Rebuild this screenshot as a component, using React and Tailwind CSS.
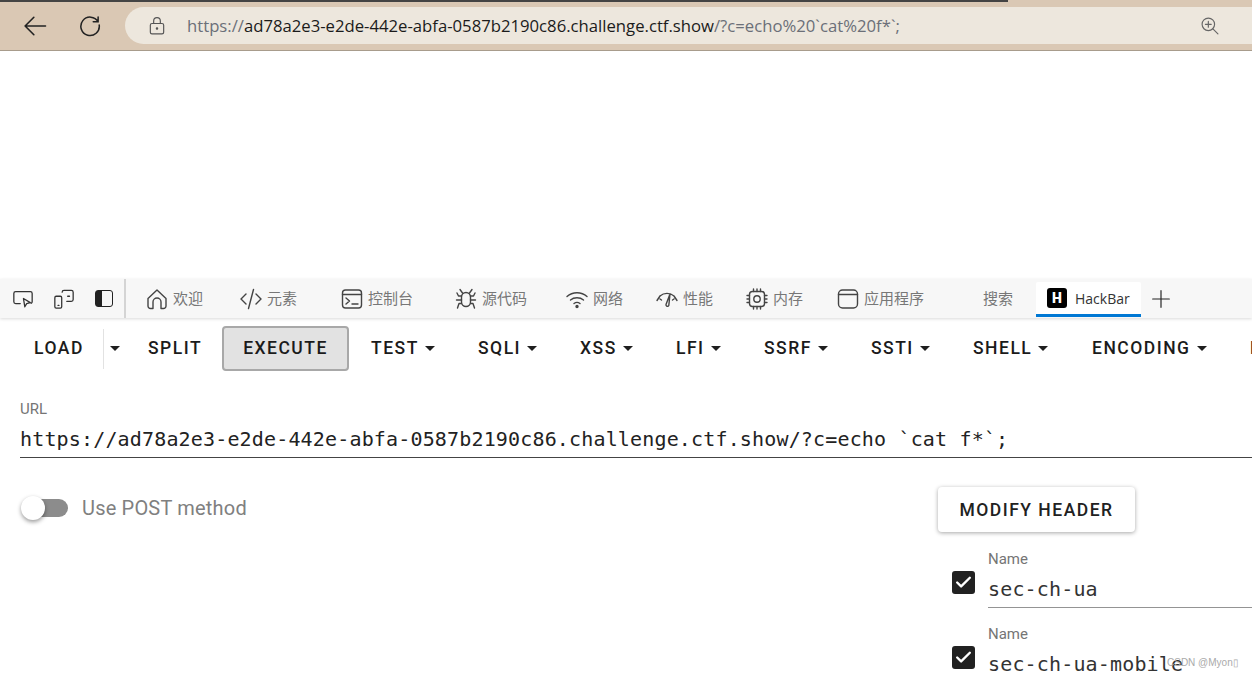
import React from "react";
import { Check } from "lucide-react";

const cjk = "font-['Noto_Sans_CJK_SC','Noto_Sans',sans-serif]";
const mono = "font-['DejaVu_Sans_Mono',monospace]";
const roboto = "font-['Roboto',sans-serif]";

const Svg = ({ children, className = "w-[24px] h-[24px]" }) => (
  <svg viewBox="0 0 24 24" fill="none" stroke="currentColor" strokeWidth="1.4" strokeLinecap="round" strokeLinejoin="round" className={`shrink-0 ${className}`}>
    {children}
  </svg>
);

const tabs = [
  {
    label: "欢迎",
    w: "w-[94px]",
    icon: <path d="M3 11.5 12 3l9 8.5V19a2.5 2.5 0 0 1-2.5 2.5H16V15a4 4 0 0 0-8 0v6.5H5.5A2.5 2.5 0 0 1 3 19z" />,
  },
  {
    label: "元素",
    w: "w-[101px]",
    icon: <path d="M7 7l-5 5 5 5M17 7l5 5-5 5M14.5 2.5l-5 19" />,
  },
  {
    label: "控制台",
    w: "w-[114px]",
    icon: (
      <>
        <rect x="2.5" y="3" width="19" height="18" rx="3" />
        <path d="M2.5 7.5h19M6 11l3.5 3L6 17M12 17h6" />
      </>
    ),
  },
  {
    label: "源代码",
    w: "w-[111px]",
    icon: (
      <>
        <path d="M7.5 10a4.5 4.5 0 0 1 9 0v5a4.5 4.5 0 0 1-9 0z" />
        <path d="M8.5 6 6 2.5M15.5 6 18 2.5M7.5 9H4.5L3 6M16.5 9h3L21 6M7.5 13H2.5M16.5 13h5M7.5 16.5H5L3.5 21M16.5 16.5H19l1.500 4.500" />
      </>
    ),
  },
  {
    label: "网络",
    w: "w-[90px]",
    icon: (
      <>
        <path d="M2 9.500c5.500-5 14.500-5 20 0M5.500 13c3.500-3 9.500-3 13 0M9 16.500c1.700-1.300 4.300-1.300 6 0" />
        <circle cx="12" cy="19.500" r="1" fill="currentColor" />
      </>
    ),
  },
  {
    label: "性能",
    w: "w-[90px]",
    icon: <path d="M2 13.500 5 9M5 9c4-3.500 10-3.500 14 0l3 4.500M6.500 13l-1.500-1M17.500 13l1.500-1M15 7l-4 10.500a1.500 1.500 0 0 0 2.800 1z" />,
  },
  {
    label: "内存",
    w: "w-[91px]",
    icon: (
      <>
        <rect x="4.500" y="4.500" width="15" height="15" rx="3" />
        <circle cx="12" cy="12" r="3.200" />
        <path d="M8.500 2v2.500M12 2v2.500M15.500 2v2.500M8.500 19.500V22M12 19.500V22M15.500 19.500V22M2 8.500h2.500M2 12h2.500M2 15.500h2.500M19.500 8.500H22M19.500 12H22M19.500 15.500H22" />
      </>
    ),
  },
  {
    label: "应用程序",
    w: "w-[147px]",
    icon: (
      <>
        <rect x="2.500" y="3" width="19" height="18" rx="4" />
        <path d="M2.500 7.500h19" />
      </>
    ),
  },
];

const menu = [
  { label: "TEST", cls: "ml-[22px] w-[107px]" },
  { label: "SQLI", cls: "w-[102px]" },
  { label: "XSS", cls: "w-[96px]" },
  { label: "LFI", cls: "w-[88px]" },
  { label: "SSRF", cls: "w-[107px]" },
  { label: "SSTI", cls: "w-[102px]" },
  { label: "SHELL", cls: "w-[119px]" },
  { label: "ENCODING", cls: "w-[158px]" },
];

const Caret = () => <span className="shrink-0 w-0 h-0 border-x-[5.500px] border-x-transparent border-t-[5.500px] border-t-[#1f1f1f] ml-[6px] mt-[-1px]" />;

const HeaderRow = ({ value }) => (
  <div className="flex h-[75px]">
    <div className="ml-[14px] mt-[19px] w-[23px] h-[23px] rounded-[3px] bg-[#212121] flex items-center justify-center text-white">
      <Check size={19} strokeWidth={3} />
    </div>
    <div className="ml-[13px] flex-1">
      <div className={`${roboto} text-[15px] leading-[16px] text-[#757575] mt-[-1px]`}>Name</div>
      <div className={`${mono} text-[20px] leading-[26px] mt-[9px] tracking-[0.16px] text-[#333] h-[32px] border-b border-[#949494] whitespace-nowrap`}>{value}</div>
    </div>
  </div>
);

export default function App() {
  return (
    <div className={`relative w-[1252px] h-[678px] overflow-hidden bg-white ${roboto}`}>
      {/* browser chrome */}
      <div className="h-[51px] bg-[#dac8b4] border-b border-[#a89c8c] relative flex items-center">
        <div className="absolute top-0 left-0 w-[1008px] h-[2px] bg-[#444]" />
        <div className="w-[125px] h-[37px] flex items-center text-[#222] shrink-0 mt-[1px]">
          <Svg className="w-[28px] h-[28px] ml-[21px]"><path d="M21 12H3.500M11 4.500 3.500 12l7.500 7.500" /></Svg>
          <Svg className="w-[26px] h-[26px] ml-[28px] mt-[-3px]"><path d="M19.500 5.500V10h-4.500M19.500 10a8.500 8.500 0 1 0 1 3" /></Svg>
        </div>
        <div className="flex-1 h-[37px] rounded-l-[19px] bg-[#ede7dd] flex items-center mt-[1px]">
          <Svg className="w-[20px] h-[20px] ml-[22px] text-[#555]">
            <rect x="4" y="9" width="16" height="12.500" rx="2" />
            <path d="M8 9V6a4 4 0 0 1 8 0v3" />
            <circle cx="12" cy="15" r="0.800" fill="currentColor" />
          </Svg>
          <div className="ml-[20px] w-[1014px] mt-[1px] text-[16.700px] text-[#1b1b1b] font-['Open_Sans',sans-serif] whitespace-nowrap">
            <span className="text-[#6b6f78]">https://</span>ad78a2e3-e2de-442e-abfa-0587b2190c86.challenge.ctf.show<span className="text-[#6b6f78]">/?c=echo%20`cat%20f*`;</span>
          </div>
          <Svg className="w-[20px] h-[20px] text-[#666] absolute left-[1200px] top-[16px]">
            <circle cx="10" cy="10" r="7.500" />
            <path d="M15.500 15.500 21.500 21.500M10 6.500v7M6.500 10h7" />
          </Svg>
        </div>
      </div>

      <div className="h-[228px]" />

      {/* devtools tabs */}
      <div className={`h-[39px] bg-[#f7f7f7] shadow-[0_1px_3px_rgba(0,0,0,0.15)] flex items-center relative ${cjk} text-[15px] text-[#777]`}>
        <div className="flex items-center text-[#333] w-[126px] h-full border-r-2 border-[#d4d4d4] shrink-0">
          <Svg className="w-[22px] h-[22px] ml-[12px]"><path d="M9 17H4a2 2 0 0 1-2-2V6a2 2 0 0 1 2-2h16a2 2 0 0 1 2 2v9a2 2 0 0 1-1 1.700M12.500 11.500l1.500 9 2-3.500 4-1z" /></Svg>
          <Svg className="w-[22px] h-[22px] ml-[19px]"><path d="M10 4.500a2 2 0 0 1 2-2h8a2 2 0 0 1 2 2v8a2 2 0 0 1-2 2h-5M16 9h2M3.500 9H8a1.500 1.500 0 0 1 1.500 1.500v10A1.500 1.500 0 0 1 8 22H3.500A1.500 1.500 0 0 1 2 20.500v-10A1.500 1.500 0 0 1 3.500 9zM5.500 19h1" /></Svg>
          <div className="ml-[20px] w-[18px] h-[17px] rounded-[3px] border-[1.500px] border-[#222] bg-[linear-gradient(90deg,#222_40%,transparent_40%)]" />
        </div>
        <div className="flex items-center h-full ml-[19px]">
          {tabs.map((t) => (
            <div key={t.label} className={`flex items-center shrink-0 ${t.w}`}>
              <span className="text-[#444]"><Svg>{t.icon}</Svg></span>
              <span className="ml-[4px] whitespace-nowrap">{t.label}</span>
            </div>
          ))}
          <span className="w-[53px] shrink-0">搜索</span>
          <div className="w-[105px] h-[35px] bg-white border-b-[3px] border-[#0078d4] rounded-t-[2px] flex items-center shrink-0 mt-[2px]">
            <div className="ml-[11px] w-[20px] h-[20px] rounded-[3px] bg-black flex items-center justify-center text-white font-['Roboto',sans-serif] font-black text-[14px] leading-none">H</div>
            <span className="ml-[8px] font-['Open_Sans',sans-serif] text-[14px] text-[#333]">HackBar</span>
          </div>
          <Svg className="w-[20px] h-[20px] ml-[10px] text-[#222]"><path d="M12 2v20M2 12h20" /></Svg>
        </div>
      </div>

      {/* hackbar toolbar */}
      <div className="h-[52px] mt-[4px] pt-px flex items-center text-[17.500px] font-medium tracking-[1.500px] text-[#1b1b1b] whitespace-nowrap">
        <span className="ml-[34px] w-[69px] shrink-0">LOAD</span>
        <span className="w-px h-[40px] bg-[#e2e2e2] shrink-0" />
        <span className="shrink-0 w-0 h-0 border-x-[5.500px] border-x-transparent border-t-[5.500px] border-t-[#1f1f1f] ml-[6px]" />
        <span className="ml-[28px] w-[74px] shrink-0">SPLIT</span>
        <div className="w-[127px] h-[45px] mt-[-1px] pt-px shrink-0 rounded-[4px] border-2 border-[#a8a8a8] bg-[#e2e2e2] flex items-center justify-center">EXECUTE</div>
        {menu.map((m) => (
          <div key={m.label} className={`flex items-center shrink-0 ${m.cls}`}>
            <span>{m.label}</span>
            <Caret />
          </div>
        ))}
        <span className="text-[#1b1b1b] shrink-0">L</span>
      </div>

      {/* url field */}
      <div className="px-[20px] mt-[27px]">
        <div className="text-[15px] leading-[16px] text-[#757575]">URL</div>
        <div className={`${mono} text-[20px] leading-[26px] tracking-[0.16px] text-[#222] mt-[9px] h-[32px] border-b border-[#444] mr-[-20px] whitespace-nowrap`}>
          https://ad78a2e3-e2de-442e-abfa-0587b2190c86.challenge.ctf.show/?c=echo `cat f*`;
        </div>
      </div>

      {/* options */}
      <div className="flex mt-[29px] pl-[20px]">
        <div className="flex-1 flex items-start">
          <div className="relative w-[48px] h-[18px] mt-[12px]">
            <div className="absolute left-[6px] right-0 inset-y-0 rounded-full bg-[#8c8c8c]" />
            <div className="absolute left-px top-[-3px] w-[24px] h-[24px] rounded-full bg-white shadow-[0_2px_4px_rgba(0,0,0,0.4)]" />
          </div>
          <span className="ml-[14px] mt-[8px] text-[20px] leading-[26px] tracking-[0.19px] text-[#808080]">Use POST method</span>
        </div>
        <div className="w-[314px] shrink-0">
          <div className="w-[197px] h-[45px] pt-[1px] rounded-[4px] bg-white shadow-[0_1px_4px_rgba(0,0,0,0.35)] flex items-center justify-center text-[17.500px] font-medium tracking-[1.500px] text-[#212121]">MODIFY HEADER</div>
          <div className="mt-[20px]">
            <HeaderRow value="sec-ch-ua" />
            <HeaderRow value="sec-ch-ua-mobile" />
          </div>
        </div>
      </div>

      <div className="absolute left-[1167px] top-[656px] text-[10px] leading-[14px] text-[#aaa] font-['Liberation_Sans',sans-serif]">CSDN @Myon▯</div>
    </div>
  );
}
